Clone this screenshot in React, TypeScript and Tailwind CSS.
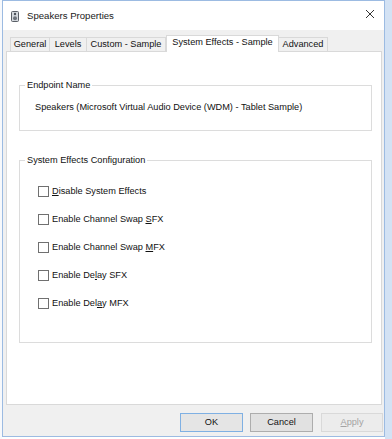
import React from "react";

const font = { fontFamily: '"Liberation Sans", Arial, sans-serif' };

function U({ children }: { children: React.ReactNode }) {
  return <span className="underline underline-offset-[1px]">{children}</span>;
}

function Check({ label }: { label: React.ReactNode }) {
  return (
    <div className="h-[28px] flex items-center">
      <div className="w-[11px] h-[11px] border border-[#707070] bg-white" />
      <span className="ml-[3px] leading-[11px]">{label}</span>
    </div>
  );
}

export default function App() {
  const tabs = [
    { t: "General", w: "w-[40px]" },
    { t: "Levels", w: "w-[37px]" },
    { t: "Custom - Sample", w: "w-[79px]" },
  ];
  return (
    <div className="w-[392px] h-[439px] bg-white flex text-[9.2px] text-[#111]" style={font}>
      <div className="w-[2px] bg-[#f7f9fc]" />
      <div className="w-[383px] h-[437px] border border-[#9cbbe2] bg-[#f0f0f0] flex flex-col">
        {/* title bar */}
        <div className="h-[29px] bg-white flex items-center pl-[8px] pr-[7px]">
          <svg width="8" height="11" viewBox="0 0 8 11" className="mt-[1px]">
            <rect x="0.5" y="0.5" width="7" height="10" rx="1" fill="#d5d9de" stroke="#5a5f66" />
            <circle cx="4" cy="3" r="1.2" fill="#4b5058" />
            <circle cx="4" cy="7.2" r="2" fill="#6d737b" />
          </svg>
          <span className="ml-[8px] text-[9.6px] text-[#1a1a1a] mt-[1px]">Speakers Properties</span>
          <div className="flex-1" />
          <svg width="10" height="10" viewBox="0 0 10 10" className="mr-[2px] -mt-[4px]">
            <path d="M1 1 L9 9 M9 1 L1 9" stroke="#333" strokeWidth="1" />
          </svg>
        </div>
        {/* tabs */}
        <div className="h-[21px] flex items-end pl-[7px]">
          {tabs.map((x, i) => (
            <div
              key={x.t}
              className={`${x.w} h-[14px] border-t border-r border-[#d9d9d9] bg-[#f0f0f0] flex items-center justify-center leading-none ${i === 0 ? "border-l" : ""}`}
            >
              {x.t}
            </div>
          ))}
          <div className="relative z-10 w-[113px] h-[17px] -mb-px bg-white border border-b-0 border-[#d9d9d9] flex items-center justify-center leading-none pb-[2px]">
            System Effects - Sample
          </div>
          <div className="w-[49px] h-[14px] border-t border-r border-[#d9d9d9] bg-[#f0f0f0] flex items-center justify-center leading-none">
            Advanced
          </div>
        </div>
        {/* panel */}
        <div className="ml-[3px] w-[376px] h-[354px] bg-white border border-[#d9d9d9] px-[12px] pt-[28px]">
          <fieldset className="h-[51px] w-[353px] border border-[#dcdcdc] pl-[5px] pt-[11px]">
            <legend className="px-[2px] leading-[11px]">Endpoint Name</legend>
            <div className="pl-[10px] leading-[11px]">Speakers (Microsoft Virtual Audio Device (WDM) - Tablet Sample)</div>
          </fieldset>
          <fieldset className="mt-[24px] h-[188px] w-[353px] border border-[#dcdcdc] pl-[5px] pt-[11px]">
            <legend className="px-[2px] leading-[11px]">System Effects Configuration</legend>
            <div className="pl-[13px] flex flex-col">
              <Check label={<><U>D</U>isable System Effects</>} />
              <Check label={<>Enable Channel Swap <U>S</U>FX</>} />
              <Check label={<>Enable Channel Swap <U>M</U>FX</>} />
              <Check label={<>Enable De<U>l</U>ay SFX</>} />
              <Check label={<>Enable Del<U>a</U>y MFX</>} />
            </div>
          </fieldset>
        </div>
        {/* buttons */}
        <div className="flex justify-end gap-[7px] pr-[1px] mt-[8px]">
          <button className="w-[63px] h-[19px] bg-[#e5e5e5] border border-[#7fb0e3] leading-none text-[9.2px]">OK</button>
          <button className="w-[63px] h-[19px] bg-[#e1e1e1] border border-[#adadad] leading-none text-[9.2px]">Cancel</button>
          <button className="ml-[1px] w-[62px] h-[19px] bg-[#ececec] border border-[#d9d9d9] text-[#a3a3a3] leading-none text-[9.2px]">
            <U>A</U>pply
          </button>
        </div>
      </div>
      <div className="flex-1 bg-[#d3e2f4]" />
    </div>
  );
}
